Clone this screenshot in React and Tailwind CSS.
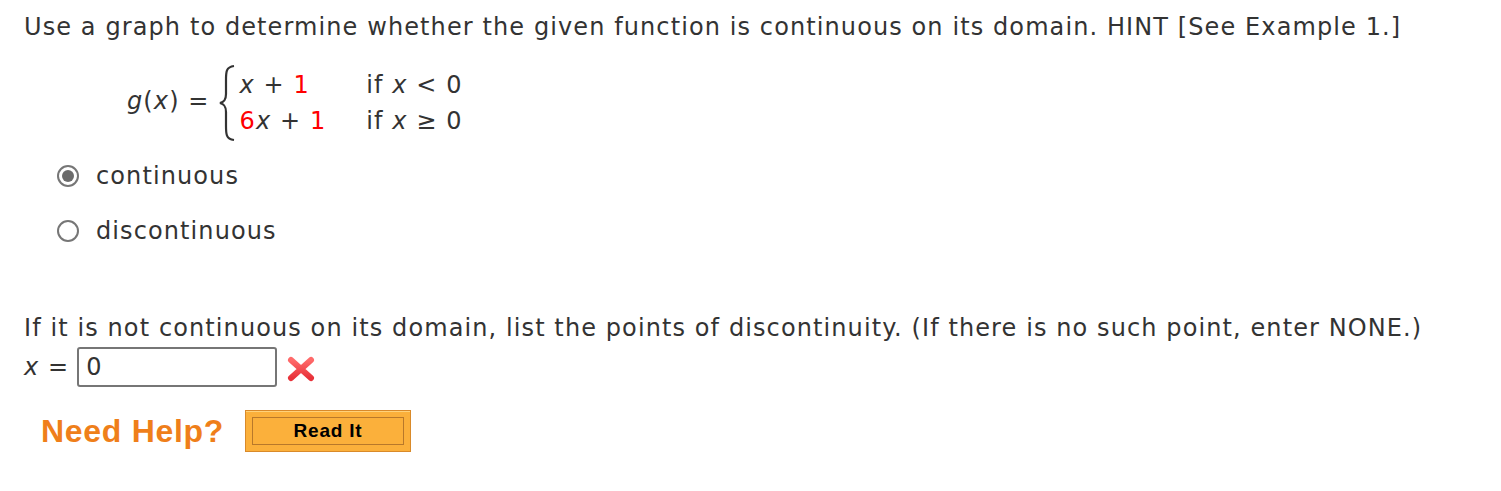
import React from 'react';

const Radio = ({ checked }) => (
    <span className="w-[22px] h-[22px] rounded-full border-2 border-[#767676] bg-white flex items-center justify-center shrink-0">
        {checked && <span className="w-[12px] h-[12px] rounded-full bg-[#6b6b6b]"></span>}
    </span>
);

const RedX = () => (
    <svg width="30" height="28" viewBox="0 0 30 28">
        <defs>
            <linearGradient id="xg" x1="0" y1="0" x2="0" y2="1">
                <stop offset="0" stopColor="#ff6a6a" />
                <stop offset="1" stopColor="#e8323a" />
            </linearGradient>
        </defs>
        <path d="M5 5 L25 23 M25 5 L5 23" stroke="url(#xg)" strokeWidth="6" strokeLinecap="round" />
    </svg>
);

const Brace = () => (
    <svg width="18" height="78" viewBox="0 0 18 78" className="shrink-0">
        <path d="M16 2 C8 3 8 8 8 16 L8 30 C8 36 6 38 2 39 C6 40 8 42 8 48 L8 62 C8 70 8 75 16 76" fill="none" stroke="#333" strokeWidth="2.2" />
    </svg>
);

export default function App() {
    return (
        <div className="w-[1501px] h-[491px] bg-white text-[#333] font-['DejaVu_Sans',Verdana,sans-serif] tracking-[1.1px] pl-[24px] pt-[10px]">
            <p className="text-[24px] leading-[34px]">
                Use a graph to determine whether the given function is continuous on its domain. HINT [See Example 1.]
            </p>

            {/* piecewise function */}
            <div className="flex items-center ml-[103px] mt-[20px] text-[24px]">
                <span className="mr-[8px] mb-[5px]"><i>g</i>(<i>x</i>) =</span>
                <Brace />
                <div className="grid grid-cols-[auto_auto] gap-x-[40px] leading-[36px] ml-[4px]">
                    <span><i>x</i> + <span className="text-[#f00]">1</span></span>
                    <span>if <i>x</i> &lt; 0</span>
                    <span><span className="text-[#f00]">6</span><i>x</i> + <span className="text-[#f00]">1</span></span>
                    <span>if <i>x</i> ≥ 0</span>
                </div>
            </div>

            {/* choices */}
            <div className="flex flex-col gap-[21px] ml-[33px] mt-[17px] text-[24px]">
                <label className="flex items-center gap-[17px] h-[34px]">
                    <Radio checked /> continuous
                </label>
                <label className="flex items-center gap-[17px] h-[34px]">
                    <Radio /> discontinuous
                </label>
            </div>

            <p className="text-[24px] leading-[34px] mt-[63px]">
                If it is not continuous on its domain, list the points of discontinuity. (If there is no such point, enter NONE.)
            </p>
            <div className="flex items-center mt-[2px] text-[24px]">
                <span className="mr-[8px]"><i>x</i> =</span>
                <div className="w-[200px] h-[40px] border-2 border-[#767676] rounded-[3px] flex items-center px-[7px]">0</div>
                <span className="ml-[9px] mt-[4px]"><RedX /></span>
            </div>

            <div className="flex items-center mt-[20px] ml-[17px] tracking-normal">
                <span className="font-['Liberation_Sans',Arial,sans-serif] font-bold text-[32px] text-[#ef7f1a] tracking-[0.7px]">Need Help?</span>
                <button className="ml-[21px] w-[166px] h-[42px] bg-[#fbb03b] border border-[#d98a2a] p-[6px] shadow-[inset_0_1px_0_#ffd27a]">
                    <span className="flex items-center justify-center w-full h-full border border-[#b8782a] font-['Liberation_Sans',Arial,sans-serif] font-bold text-[19px] tracking-[0.8px] text-black">
                        Read It
                    </span>
                </button>
            </div>
        </div>
    );
}
